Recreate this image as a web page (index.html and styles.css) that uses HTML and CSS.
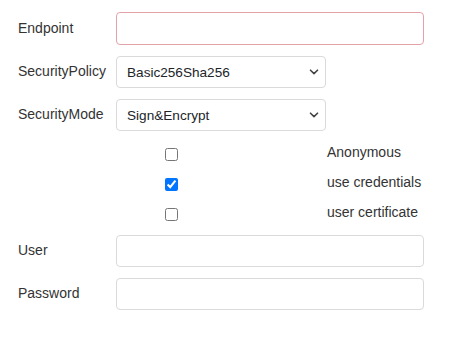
FILE: index.html
```html
<!DOCTYPE html>
<html lang="en">

<head>
    <meta charset="UTF-8">
    <meta name="viewport" content="width=device-width, initial-scale=1.0">
    <title>Connection</title>
    <link rel="stylesheet" href="styles.css">
</head>

<body>
    <form class="conn-form">
        <div class="form-row">
            <label class="form-label" for="endpoint">Endpoint</label>
            <input class="form-input is-invalid" id="endpoint" type="text">
        </div>
        <div class="form-row">
            <label class="form-label" for="policy">SecurityPolicy</label>
            <div class="select-wrap">
                <select class="form-select" id="policy">
                    <option>Basic256Sha256</option>
                    <option>Basic256</option>
                    <option>None</option>
                </select>
                <svg class="select-arrow" width="10" height="6" viewBox="0 0 10 6" fill="none" stroke="#444" stroke-width="1.6" stroke-linecap="round" stroke-linejoin="round">
                    <polyline points="1.5 1.2 5 4.6 8.5 1.2"></polyline>
                </svg>
            </div>
        </div>
        <div class="form-row">
            <label class="form-label" for="mode">SecurityMode</label>
            <div class="select-wrap">
                <select class="form-select" id="mode">
                    <option>Sign&amp;Encrypt</option>
                    <option>Sign</option>
                    <option>None</option>
                </select>
                <svg class="select-arrow" width="10" height="6" viewBox="0 0 10 6" fill="none" stroke="#444" stroke-width="1.6" stroke-linecap="round" stroke-linejoin="round">
                    <polyline points="1.5 1.2 5 4.6 8.5 1.2"></polyline>
                </svg>
            </div>
        </div>

        <!-- auth type -->
        <div class="check-list">
            <div class="check-row">
                <div class="check-box"><input type="checkbox" id="anon"></div>
                <label class="check-label" for="anon">Anonymous</label>
            </div>
            <div class="check-row">
                <div class="check-box"><input type="checkbox" id="cred" checked></div>
                <label class="check-label" for="cred">use credentials</label>
            </div>
            <div class="check-row">
                <div class="check-box"><input type="checkbox" id="cert"></div>
                <label class="check-label" for="cert">user certificate</label>
            </div>
        </div>

        <div class="form-row">
            <label class="form-label" for="user">User</label>
            <input class="form-input" id="user" type="text">
        </div>
        <div class="form-row">
            <label class="form-label" for="password">Password</label>
            <input class="form-input" id="password" type="password">
        </div>
    </form>
</body>

</html>
```

FILE: styles.css
```css
body {
    margin: 0;
    background-color: #fff;
    font-family: Arial, "Liberation Sans", sans-serif;
    font-size: 14px;
    color: #333;
}

.conn-form {
    padding: 12px 0 0 18px;
    width: 406px;
}

/* label + control rows */

.form-row {
    display: flex;
    align-items: center;
    margin-bottom: 11px;
}

.form-label {
    width: 98px;
    flex-shrink: 0;
    margin-top: -2px;
}

.form-input,
.form-select {
    box-sizing: border-box;
    height: 32px;
    border: 1px solid #dadada;
    border-radius: 4px;
    background-color: #fff;
    font-family: inherit;
    font-size: 14px;
    color: #212529;
    outline: none;
}

.form-input {
    width: 308px;
    padding: 0 10px;
}

.form-input.is-invalid {
    height: 33px;
    border-color: #e3a2a7;
}

.select-wrap {
    position: relative;
    display: flex;
}

.form-select {
    -webkit-appearance: none;
    appearance: none;
    width: 210px;
    padding: 0 24px 0 10px;
    font-size: 13.6px;
}

.select-arrow {
    position: absolute;
    right: 7px;
    top: 13px;
    pointer-events: none;
}

/* checkboxes */

.check-list {
    margin: -3px 0 6px 98px;
}

.check-row {
    display: flex;
    align-items: center;
    height: 30px;
}

.check-box {
    width: 110px;
    display: flex;
    justify-content: center;
}

.check-box input {
    margin: 0;
    width: 13px;
    height: 13px;
}

.check-label {
    margin-left: 101px;
    margin-top: -4px;
}
```
